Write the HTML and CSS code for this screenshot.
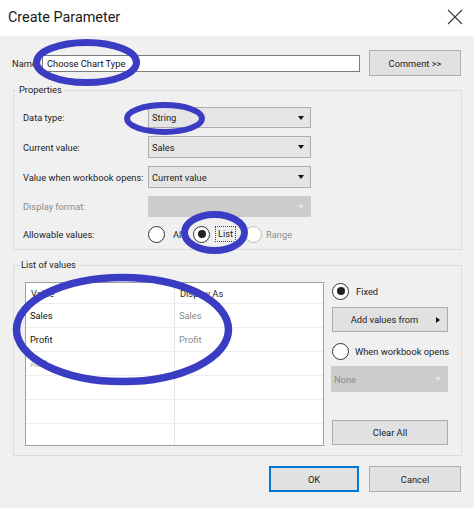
FILE: index.html
```html
<!DOCTYPE html>
<html>
<head>
<meta charset="utf-8">
<link rel="stylesheet" href="styles.css">
</head>
<body>
<div class="dialog">
  <div class="titlebar">
    <span class="title">Create Parameter</span>
    <svg class="close" width="16" height="16" viewBox="0 0 16 16"><path d="M1 1 L15 15 M15 1 L1 15" stroke="#3a3a3a" stroke-width="1.1" fill="none"/></svg>
  </div>
  <div class="body">
    <div class="name-row">
      <span class="name-label">Name</span>
      <div class="textbox">Choose Chart Type</div>
      <div class="btn comment">Comment &gt;&gt;</div>
    </div>

    <fieldset class="group props">
      <legend>Properties</legend>
      <div class="row">
        <span class="lbl">Data type:</span>
        <div class="select"><span class="sel-text">String</span><i class="arrow"></i></div>
      </div>
      <div class="row r2">
        <span class="lbl">Current value:</span>
        <div class="select"><span class="sel-text">Sales</span><i class="arrow"></i></div>
      </div>
      <div class="row r2">
        <span class="lbl">Value when workbook opens:</span>
        <div class="select"><span class="sel-text">Current value</span><i class="arrow"></i></div>
      </div>
      <div class="row">
        <span class="lbl disabled">Display format:</span>
        <div class="select off"><span class="sel-text"></span><i class="arrow"></i></div>
      </div>
      <div class="row radios">
        <span class="lbl">Allowable values:</span>
        <span class="opt opt-all"><span class="radio"></span><span>All</span></span>
        <span class="opt opt-list"><span class="radio on"></span><span class="focus">List</span></span>
        <span class="opt opt-range"><span class="radio dim"></span><span class="disabled">Range</span></span>
      </div>
    </fieldset>

    <fieldset class="group values">
      <legend>List of values</legend>
      <div class="values-inner">
        <div class="listbox">
          <div class="lrow head"><div class="cell">Value</div><div class="cell">Display As</div></div>
          <div class="lrow"><div class="cell">Sales</div><div class="cell alias">Sales</div></div>
          <div class="lrow"><div class="cell">Profit</div><div class="cell alias">Profit</div></div>
          <div class="lrow"><div class="cell ph">Add</div><div class="cell"></div></div>
          <div class="lrow"><div class="cell"></div><div class="cell"></div></div>
          <div class="lrow"><div class="cell"></div><div class="cell"></div></div>
          <div class="lrow last"><div class="cell"></div><div class="cell"></div></div>
        </div>
        <div class="side">
          <div class="side-radio"><span class="radio on"></span><span>Fixed</span></div>
          <div class="btn addvals"><span class="btn-text">Add values from</span><i class="arrow-right"></i></div>
          <div class="side-radio wwo"><span class="radio"></span><span>When workbook opens</span></div>
          <div class="select off none"><span class="sel-text">None</span><i class="arrow"></i></div>
          <div class="btn clear">Clear All</div>
        </div>
      </div>
    </fieldset>

    <div class="footer">
      <div class="btn ok">OK</div>
      <div class="btn cancel">Cancel</div>
    </div>
  </div>

  <svg class="annot" width="474" height="508" viewBox="0 0 474 508">
    <g fill="none" stroke="#3b3cc4">
      <ellipse cx="86.5" cy="62.5" rx="50" ry="20" stroke-width="7"/>
      <ellipse cx="164.5" cy="118.5" rx="37.5" ry="13.5" stroke-width="6"/>
      <ellipse cx="214.5" cy="232.5" rx="30" ry="18" stroke-width="7"/>
      <ellipse cx="122.5" cy="329.5" rx="106" ry="52" stroke-width="7.5"/>
    </g>
  </svg>
</div>
</body>
</html>
```

FILE: styles.css
```css
* { box-sizing: border-box; }
html, body { margin: 0; padding: 0; }
body {
  width: 474px;
  height: 508px;
  background: #f0f0f0;
  font-family: Roboto, "Noto Sans", sans-serif;
  font-size: 9.3px;
  color: #222;
  overflow: hidden;
  white-space: nowrap;
}
.dialog { position: relative; width: 474px; height: 508px; background: #f0f0f0; }

.titlebar {
  height: 36px;
  background: #ffffff;
  display: flex;
  align-items: center;
  justify-content: space-between;
  padding: 0 11px 2px 8px;
}
.title { font-size: 14.4px; color: #1a1a1a; }
.close { display: block; }

.body { padding: 14px 12px 0 12px; }

.name-row { display: flex; align-items: center; height: 26px; }
.name-label { width: 30px; }
.textbox {
  width: 318px;
  height: 17px;
  border: 1px solid #7a7a7a;
  background: #fff;
  padding: 0 0 0 4px;
  line-height: 15px;
  color: #111;
}
.btn {
  background: #e1e1e1;
  border: 1px solid #adadad;
  display: flex;
  align-items: center;
  justify-content: center;
  color: #222;
}
.comment { width: 92px; height: 26px; margin-left: 9px; }

.group {
  margin: 0 0 0 1px;
  border: 1px solid #dcdcdc;
  min-width: 0;
}
.group legend {
  padding: 0 2px;
  margin-left: -6px;
  line-height: 14px;
  color: #222;
}
.props { margin-top: 7px; padding: 10px 12px 6px 9px; }

.row { display: flex; align-items: center; height: 21px; }
.row.r2 { height: 22px; }
.row + .row { margin-top: 8px; }
.row.radios { height: 18px; }
.lbl { width: 125px; flex: none; }
.disabled { color: #8d8d8d; }

.select {
  width: 163px;
  height: 100%;
  background: #e5e5e5;
  border: 1px solid #adadad;
  display: flex;
  align-items: center;
  padding: 0 0 0 3px;
}
.sel-text { flex: 1; }
.arrow {
  width: 0; height: 0;
  border-left: 3.5px solid transparent;
  border-right: 3.5px solid transparent;
  border-top: 4px solid #111;
  margin-right: 6px;
}
.select.off { background: #cccccc; border-color: #cccccc; }
.select.off .arrow { border-top-color: #e6e6e6; }
.select.off .sel-text { color: #8a8a8a; }

.opt { display: inline-flex; align-items: center; flex: none; }
.opt-all { width: 45px; gap: 8px; }
.opt-list { width: 52px; gap: 5px; }
.opt-range { gap: 4px; }
.radio {
  width: 17px; height: 17px;
  border-radius: 50%;
  border: 1px solid #333;
  background: #fff;
  display: inline-flex;
  align-items: center;
  justify-content: center;
  flex: none;
}
.radio.on::after {
  content: "";
  width: 8px; height: 8px;
  border-radius: 50%;
  background: #222;
}
.radio.dim { border-color: #bcbcbc; }
.focus { border: 1px dotted #444; padding: 1px 2px; line-height: 12px; }

.values { margin-top: 8px; padding: 10px 13px 9px 11px; }
.values-inner { display: flex; gap: 8px; }
.listbox {
  width: 299px;
  height: 164px;
  border: 1px solid #a0a0a0;
  background: #fff;
  flex: none;
}
.lrow {
  display: grid;
  grid-template-columns: 149px 1fr;
  height: 24px;
  border-bottom: 1px solid #ededed;
}
.lrow.head { height: 21px; }
.lrow.last { height: 21px; border-bottom: none; }
.cell { display: flex; align-items: center; padding-left: 4px; color: #111; }
.cell:first-child { border-right: 1px solid #e6e6e6; }
.head .cell { color: #2a2a2a; padding-left: 5px; }
.cell.alias { color: #8a8a8a; }
.cell.ph { color: #b4b4b4; }

.side { width: 116px; flex: none; display: flex; flex-direction: column; }
.side-radio { display: flex; align-items: center; gap: 7px; height: 18px; }
.addvals { height: 25px; margin-top: 7px; }
.btn-text { flex: 1; text-align: center; }
.arrow-right {
  width: 0; height: 0;
  border-top: 3.5px solid transparent;
  border-bottom: 3.5px solid transparent;
  border-left: 4px solid #111;
  margin-right: 7px;
}
.wwo { margin-top: 10px; gap: 6px; }
.select.none { width: 117px; height: 26px; margin-top: 6px; margin-left: -1px; padding-left: 2px; }
.clear { height: 25px; margin-top: 28px; }

.footer { display: flex; justify-content: flex-end; gap: 10px; margin-top: 10px; padding-right: 1px; }
.ok { width: 90px; height: 26px; border: 1px solid #0078d7; box-shadow: inset 0 0 0 1px #0078d7; }
.cancel { width: 92px; height: 26px; }

.annot { position: absolute; left: 0; top: 0; pointer-events: none; }
```
